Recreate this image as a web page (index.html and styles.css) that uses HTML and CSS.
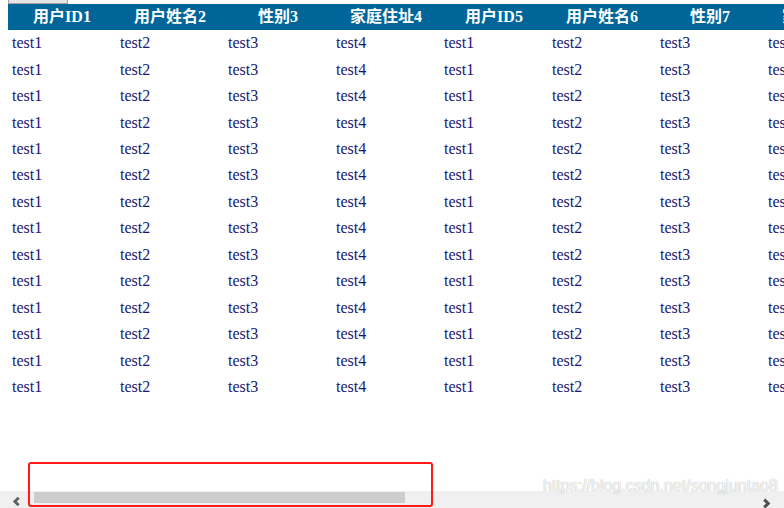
FILE: index.html
```html
<!DOCTYPE html>
<html>
<head>
<meta charset="utf-8">
<link rel="stylesheet" href="styles.css">
</head>
<body>
<div class="page">
  <div class="content">
    <div class="tab-stub"></div>
    <table class="grid">
      <thead>
        <tr>
          <th>用户ID1</th><th>用户姓名2</th><th>性别3</th><th>家庭住址4</th>
          <th>用户ID5</th><th>用户姓名6</th><th>性别7</th><th>家庭住址8</th>
        </tr>
      </thead>
      <tbody id="rows"></tbody>
    </table>
  </div>
  <div class="hscroll">
    <span class="arrow left"><svg width="11" height="11" viewBox="0 0 10 10"><path d="M7 1.5 L3.5 5 L7 8.5" fill="none" stroke="#606060" stroke-width="2.6"/></svg></span>
    <div class="track"><div class="thumb"></div></div>
    <span class="arrow right"><svg width="11" height="11" viewBox="0 0 10 10"><path d="M3 1.5 L6.5 5 L3 8.5" fill="none" stroke="#505050" stroke-width="2.8"/></svg></span>
  </div>
  <div class="highlight"></div>
  <div class="watermark">https://blog.csdn.net/songjuntao8</div>
</div>
<script>
  var tb = document.getElementById('rows');
  var html = '';
  for (var r = 0; r < 14; r++) {
    html += '<tr><td>test1</td><td>test2</td><td>test3</td><td>test4</td><td>test1</td><td>test2</td><td>test3</td><td>test4</td></tr>';
  }
  tb.innerHTML = html;
</script>
</body>
</html>
```

FILE: styles.css
```css
html, body {
  margin: 0;
  padding: 0;
  background: #ffffff;
  overflow: hidden;
}
.page {
  position: relative;
  width: 784px;
  height: 508px;
  display: flex;
  flex-direction: column;
  overflow: hidden;
}
.content {
  flex: 1;
  padding-left: 8px;
  overflow: hidden;
}
.tab-stub {
  width: 58px;
  height: 3px;
  background: #e6e6e6;
  border: 1px solid #a0a0a0;
  border-top: none;
  box-sizing: content-box;
}
.grid {
  border-collapse: collapse;
  table-layout: fixed;
  width: 864px;
  font-family: "Liberation Serif", "Noto Sans CJK SC", serif;
}
.grid th {
  width: 108px;
  height: 26px;
  padding: 0;
  background: #006699;
  color: #ffffff;
  font-size: 16px;
  font-weight: bold;
  text-align: center;
  white-space: nowrap;
  line-height: 26px;
}
.grid tbody tr {
  height: 26.46px;
}
.grid td {
  padding: 0 0 0 4px;
  font-size: 16px;
  color: #191970;
  text-align: left;
  white-space: nowrap;
  line-height: 26px;
}
.hscroll {
  height: 17px;
  background: #f0f0f0;
  display: flex;
  align-items: flex-start;
}
.arrow {
  display: flex;
  align-items: center;
  justify-content: center;
  height: 17px;
}
.arrow.left {
  width: 17px;
  margin-left: 8px;
  margin-top: 2px;
}
.arrow.right {
  width: 17px;
  margin-right: 9px;
  margin-top: 4px;
}
.track {
  flex: 1;
  padding-top: 1px;
  padding-left: 9px;
}
.thumb {
  width: 371px;
  height: 11px;
  background: #cdcdcd;
}
.highlight {
  position: absolute;
  left: 28px;
  top: 462px;
  width: 401px;
  height: 41px;
  border: 2px solid #ff1a1a;
  border-radius: 3px;
}
.watermark {
  position: absolute;
  left: 543px;
  top: 477px;
  font-family: "Liberation Sans", Arial, sans-serif;
  font-size: 16px;
  color: rgba(255, 255, 255, 0.9);
  text-shadow: 0 0 1px rgba(110, 110, 110, 0.7);
  white-space: nowrap;
}
```
